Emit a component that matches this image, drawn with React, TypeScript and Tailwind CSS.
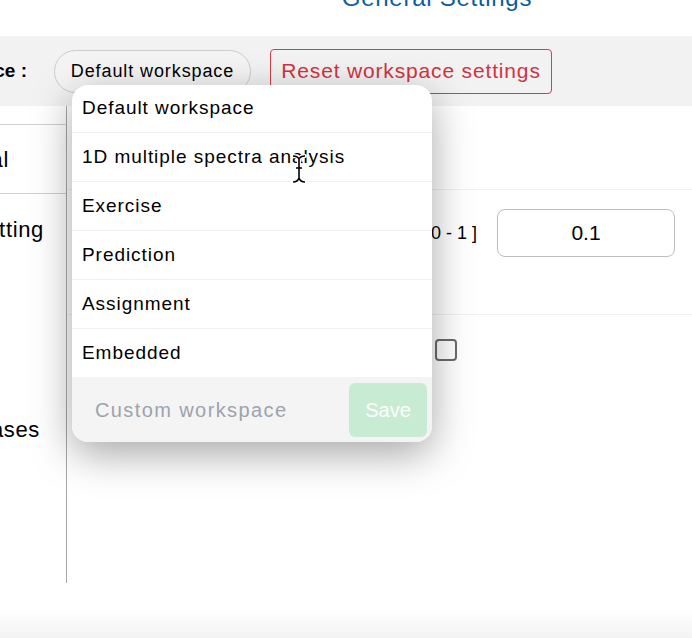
import React from 'react';

const workspaces = [
  'Default workspace',
  '1D multiple spectra analysis',
  'Exercise',
  'Prediction',
  'Assignment',
  'Embedded',
];

function IBeam() {
  return (
    <svg
      className="absolute left-[290px] top-[154px]"
      width="18"
      height="30"
      viewBox="0 0 18 30"
      fill="none"
    >
      <path
        d="M3 2c3 0 5 1 6 3c1-2 3-3 6-3M9 5v19M6 14h6M3 28c3 0 5-1 6-4c1 3 3 4 6 4"
        stroke="#fff"
        strokeWidth="4"
        strokeLinecap="round"
      />
      <path
        d="M3 2c3 0 5 1 6 3c1-2 3-3 6-3M9 5v19M6 14h6M3 28c3 0 5-1 6-4c1 3 3 4 6 4"
        stroke="#000"
        strokeWidth="1.6"
      />
    </svg>
  );
}

function WorkspaceMenu() {
  return (
    <div className="absolute left-[72px] top-[85px] w-[360px] overflow-hidden rounded-[16px] bg-white shadow-[0_12px_40px_rgba(0,0,0,0.35)]">
      {workspaces.map((name, i) => (
        <div
          key={name}
          className={`flex items-center px-[10px] text-[19px] tracking-[0.05em] text-black ${
            i === 0 ? 'h-[47px]' : 'h-[49px] border-t border-[#f0f0f0]'
          }`}
        >
          {name}
        </div>
      ))}
      <div className="flex h-[65px] items-center justify-between bg-[#f4f4f4] pl-[23px] pr-[5px]">
        <input
          placeholder="Custom workspace"
          className="w-[230px] bg-transparent text-[20px] tracking-[0.07em] text-black outline-none placeholder:text-[#9ca3ad]"
        />
        <button className="h-[54px] w-[78px] rounded-[6px] bg-[#c8ecd3] text-[20px] text-white">
          Save
        </button>
      </div>
    </div>
  );
}

export default function App() {
  return (
    <div className="relative h-[638px] w-[692px] overflow-hidden bg-white font-['Liberation_Sans',Arial,sans-serif]">
      {/* Title */}
      <div className="flex h-[36px] justify-center overflow-hidden pl-[182px]">
        <h1 className="-mt-[14px] text-[24px] leading-none tracking-[0.03em] text-[#0b5c9e]">
          General Settings
        </h1>
      </div>

      {/* Toolbar */}
      <div className="flex h-[70px] items-center bg-[#f2f2f2]">
        <div className="flex w-[27px] justify-end overflow-hidden whitespace-nowrap">
          <span className="text-[19px] font-bold text-black">Workspace :</span>
        </div>
        <button className="ml-[27px] h-[43px] w-[197px] rounded-full border border-[#cccccc] bg-[#f4f4f4] text-[18px] tracking-[0.05em] text-black">
          Default workspace
        </button>
        <button className="ml-[19px] h-[45px] w-[282px] rounded-[4px] border border-[#e03a45] text-[21px] tracking-[0.04em] text-[#d2323e]">
          Reset workspace settings
        </button>
      </div>

      {/* Body */}
      <div className="flex h-[477px]">
        <div className="w-[67px] shrink-0 overflow-hidden border-r border-[#a8a8a8] text-[22px] tracking-[0.03em] text-black">
          <div className="h-[19px] border-b border-[#cfcfcf]" />
          <div className="flex h-[68px] items-center justify-end overflow-hidden whitespace-nowrap pr-[57px]">
            General
          </div>
          <div className="border-t border-[#cfcfcf]">
            <div className="flex h-[70px] items-center justify-end overflow-hidden whitespace-nowrap pr-[22px]">
              Formatting
            </div>
            <div className="h-[130px]" />
            <div className="flex h-[70px] items-center justify-end overflow-hidden whitespace-nowrap pr-[26px]">
              Databases
            </div>
          </div>
        </div>

        <div className="flex-1">
          <div className="h-[84px] border-b border-[#f0f0f0]" />
          <div className="flex h-[125px] items-start border-b border-[#f0f0f0] pt-[19px]">
            <div className="flex h-[48px] w-[430px] items-center justify-end whitespace-nowrap pr-[20px] text-[18px] text-black">
              [ 0 - 1 ]
            </div>
            <input
              defaultValue="0.1"
              className="h-[48px] w-[178px] rounded-[8px] border border-[#bdbdbd] text-center text-[21px] text-black outline-none"
            />
          </div>
          <div className="flex pl-[368px] pt-[24px]">
            <div className="h-[22px] w-[22px] rounded-[4px] border-2 border-[#6b6b6b]" />
          </div>
        </div>
      </div>

      {/* Bottom fade */}
      <div className="h-[55px] bg-gradient-to-b from-white via-white to-[#f3f3f3]" />

      <WorkspaceMenu />
      <IBeam />
    </div>
  );
}
